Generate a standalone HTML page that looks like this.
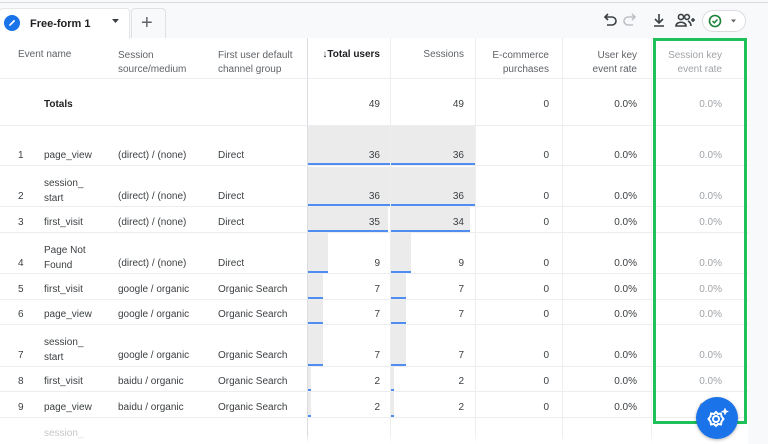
<!DOCTYPE html>
<html><head><meta charset="utf-8"><style>
*{margin:0;padding:0;box-sizing:border-box}
body{width:768px;height:444px;overflow:hidden;background:#fff;font-family:"Liberation Sans",Arial,sans-serif;font-size:10px;color:#3c4043;position:relative}
.a{position:absolute;line-height:12px;white-space:nowrap;margin-top:2px}
.r{text-align:right}
.h{color:#5f6368}
.hl{position:absolute;left:0;width:748px;height:1px;background:#ebedf0}
.vl{position:absolute;width:1px;background:#eceef0}
.g{position:absolute;background:#ebebeb}
.b{position:absolute;height:2px;background:#4f8ef0}
.f{color:#a0a4a8}
</style></head><body>
<!-- top bar -->
<div style="position:absolute;left:0;top:0;width:768px;height:38px;background:#f8f9fa"></div>
<div style="position:absolute;left:0;top:2px;width:768px;height:1px;background:#dadce0"></div>
<div style="position:absolute;left:-1px;top:8px;width:131px;height:31px;background:#fff;border:1px solid #e3e5e8;border-bottom:none;border-radius:4px 4px 0 0"></div>
<div style="position:absolute;left:131px;top:8px;width:35px;height:30px;background:#f8f9fa;border:1px solid #dfe1e5;border-bottom:none;border-radius:4px 4px 0 0"></div>
<div style="position:absolute;left:4px;top:15px;width:16px;height:16px;border-radius:50%;background:#1a73e8"></div>
<svg style="position:absolute;left:4px;top:15px" width="16" height="16"><path d="M5 11 L5.5 9.3 L10 4.8 L11.2 6 L6.7 10.5 Z" fill="#fff"/></svg>
<div class="a" style="left:30px;top:16px;font-size:11px;font-weight:bold;color:#202124">Free-form 1</div>
<svg style="position:absolute;left:112px;top:19px" width="8" height="5"><path d="M0 0H7L3.5 4Z" fill="#3c4043"/></svg>
<div class="a" style="left:141px;top:7px;font-size:20px;line-height:28px;color:#5f6368">+</div>
<!-- right icons -->
<svg style="position:absolute;left:602px;top:12px" width="140" height="18" fill="none" stroke-width="1.6">
<path d="M4 5 H10 A4 4 0 0 1 10 13 H5 M6 2 L3 5 L6 8" stroke="#3c4043"/>
<path d="M32 5 H26 A4 4 0 0 0 26 13 H31 M30 2 L33 5 L30 8" stroke="#bdc1c6"/>
<path d="M57 2 V10 M53 7 L57 11 L61 7 M52 14 H62" stroke="#3c4043"/>
<circle cx="79" cy="5" r="2.6" stroke="#3c4043"/><circle cx="85" cy="5" r="2.4" stroke="#3c4043"/><path d="M74 14 C74 9 84 9 84 14 Z M86 9 C88 10 89 12 89 14 M89 8 H93 M91 6 V10" stroke="#3c4043"/>
</svg>
<div style="position:absolute;left:702px;top:10px;width:44px;height:22px;border:1px solid #dadce0;border-radius:11px;background:#fff"></div>
<svg style="position:absolute;left:707px;top:13px" width="36" height="16" fill="none"><circle cx="8" cy="8" r="5.5" stroke="#188038" stroke-width="1.6"/><path d="M5.5 8 L7.3 9.8 L10.5 6.5" stroke="#188038" stroke-width="1.5"/><path d="M24 6.5H29L26.5 9.5Z" fill="#5f6368"/></svg>
<!-- right gray strip -->
<div style="position:absolute;left:748px;top:38px;width:20px;height:406px;background:#f8f9fa"></div>
<!-- vertical lines -->
<div class="vl" style="left:307px;top:38px;height:406px;background:#dadce0"></div>
<div class="vl" style="left:390px;top:38px;height:406px"></div>
<div class="vl" style="left:475px;top:38px;height:406px"></div>
<div class="vl" style="left:562px;top:38px;height:406px"></div>
<div class="vl" style="left:651px;top:38px;height:406px"></div>
<!-- headers -->
<div class="a h" style="left:18px;top:47px">Event name</div>
<div class="a h" style="left:118px;top:47px;line-height:14px">Session<br>source/medium</div>
<div class="a h" style="left:218px;top:47px;line-height:14px">First user default<br>channel group</div>
<div class="a r" style="left:310px;width:70px;top:47px;color:#202124;font-weight:bold">↓Total users</div>
<div class="a r h" style="left:392px;width:72px;top:47px">Sessions</div>
<div class="a r h" style="left:476px;width:73px;top:47px;line-height:14px">E-commerce<br>purchases</div>
<div class="a r h" style="left:563px;width:74px;top:47px;line-height:14px">User key<br>event rate</div>
<div class="a r f" style="left:653px;width:69px;top:47px;line-height:14px">Session key<br>event rate</div>
<div class="hl" style="top:78px"></div>
<!-- totals -->
<div class="a" style="left:44px;top:97px;font-weight:bold;color:#202124">Totals</div>
<div class="a r" style="left:310px;width:70px;top:97px">49</div>
<div class="a r" style="left:392px;width:72px;top:97px">49</div>
<div class="a r" style="left:476px;width:73px;top:97px">0</div>
<div class="a r" style="left:563px;width:74px;top:97px">0.0%</div>
<div class="a r f" style="left:653px;width:69px;top:97px">0.0%</div>
<div class="hl" style="top:125px"></div>
<!-- bars -->
<div class="g" style="left:308px;top:126px;width:82px;height:39px"></div><div class="b" style="left:308px;top:163px;width:82px"></div>
<div class="g" style="left:391px;top:126px;width:84px;height:39px"></div><div class="b" style="left:391px;top:163px;width:84px"></div>
<div class="g" style="left:308px;top:167px;width:82px;height:39px"></div><div class="b" style="left:308px;top:204px;width:82px"></div>
<div class="g" style="left:391px;top:167px;width:84px;height:39px"></div><div class="b" style="left:391px;top:204px;width:84px"></div>
<div class="g" style="left:308px;top:207px;width:80px;height:25px"></div><div class="b" style="left:308px;top:230px;width:80px"></div>
<div class="g" style="left:391px;top:207px;width:79px;height:25px"></div><div class="b" style="left:391px;top:230px;width:79px"></div>
<div class="g" style="left:308px;top:233px;width:20px;height:40px"></div><div class="b" style="left:308px;top:271px;width:20px"></div>
<div class="g" style="left:391px;top:233px;width:20px;height:40px"></div><div class="b" style="left:391px;top:271px;width:20px"></div>
<div class="g" style="left:308px;top:274px;width:15px;height:25px"></div><div class="b" style="left:308px;top:297px;width:15px"></div>
<div class="g" style="left:391px;top:274px;width:15px;height:25px"></div><div class="b" style="left:391px;top:297px;width:15px"></div>
<div class="g" style="left:308px;top:300px;width:15px;height:24px"></div><div class="b" style="left:308px;top:322px;width:15px"></div>
<div class="g" style="left:391px;top:300px;width:15px;height:24px"></div><div class="b" style="left:391px;top:322px;width:15px"></div>
<div class="g" style="left:308px;top:325px;width:15px;height:41px"></div><div class="b" style="left:308px;top:364px;width:15px"></div>
<div class="g" style="left:391px;top:325px;width:15px;height:41px"></div><div class="b" style="left:391px;top:364px;width:15px"></div>
<div class="g" style="left:308px;top:367px;width:3px;height:24px"></div><div class="b" style="left:308px;top:389px;width:3px"></div>
<div class="g" style="left:391px;top:367px;width:3px;height:24px"></div><div class="b" style="left:391px;top:389px;width:3px"></div>
<div class="g" style="left:308px;top:392px;width:3px;height:25px"></div><div class="b" style="left:308px;top:415px;width:3px"></div>
<div class="g" style="left:391px;top:392px;width:3px;height:25px"></div><div class="b" style="left:391px;top:415px;width:3px"></div>
<!-- row separators -->
<div class="hl" style="top:165px"></div><div class="hl" style="top:206px"></div><div class="hl" style="top:232px"></div><div class="hl" style="top:273px"></div><div class="hl" style="top:299px"></div><div class="hl" style="top:324px"></div><div class="hl" style="top:366px"></div><div class="hl" style="top:391px"></div><div class="hl" style="top:417px"></div>
<!-- rows -->
<div class="a" style="left:18px;top:148px">1</div><div class="a" style="left:44px;top:148px">page_view</div><div class="a" style="left:118px;top:148px">(direct) / (none)</div><div class="a" style="left:218px;top:148px">Direct</div>
<div class="a r" style="left:310px;width:70px;top:148px">36</div><div class="a r" style="left:392px;width:72px;top:148px">36</div><div class="a r" style="left:476px;width:73px;top:148px">0</div><div class="a r" style="left:563px;width:74px;top:148px">0.0%</div><div class="a r f" style="left:653px;width:69px;top:148px">0.0%</div>

<div class="a" style="left:18px;top:189px">2</div><div class="a" style="left:44px;top:174px;line-height:15px">session_<br>start</div><div class="a" style="left:118px;top:189px">(direct) / (none)</div><div class="a" style="left:218px;top:189px">Direct</div>
<div class="a r" style="left:310px;width:70px;top:189px">36</div><div class="a r" style="left:392px;width:72px;top:189px">36</div><div class="a r" style="left:476px;width:73px;top:189px">0</div><div class="a r" style="left:563px;width:74px;top:189px">0.0%</div><div class="a r f" style="left:653px;width:69px;top:189px">0.0%</div>

<div class="a" style="left:18px;top:215px">3</div><div class="a" style="left:44px;top:215px">first_visit</div><div class="a" style="left:118px;top:215px">(direct) / (none)</div><div class="a" style="left:218px;top:215px">Direct</div>
<div class="a r" style="left:310px;width:70px;top:215px">35</div><div class="a r" style="left:392px;width:72px;top:215px">34</div><div class="a r" style="left:476px;width:73px;top:215px">0</div><div class="a r" style="left:563px;width:74px;top:215px">0.0%</div><div class="a r f" style="left:653px;width:69px;top:215px">0.0%</div>

<div class="a" style="left:18px;top:256px">4</div><div class="a" style="left:44px;top:241px;line-height:15px">Page Not<br>Found</div><div class="a" style="left:118px;top:256px">(direct) / (none)</div><div class="a" style="left:218px;top:256px">Direct</div>
<div class="a r" style="left:310px;width:70px;top:256px">9</div><div class="a r" style="left:392px;width:72px;top:256px">9</div><div class="a r" style="left:476px;width:73px;top:256px">0</div><div class="a r" style="left:563px;width:74px;top:256px">0.0%</div><div class="a r f" style="left:653px;width:69px;top:256px">0.0%</div>

<div class="a" style="left:18px;top:282px">5</div><div class="a" style="left:44px;top:282px">first_visit</div><div class="a" style="left:118px;top:282px">google / organic</div><div class="a" style="left:218px;top:282px">Organic Search</div>
<div class="a r" style="left:310px;width:70px;top:282px">7</div><div class="a r" style="left:392px;width:72px;top:282px">7</div><div class="a r" style="left:476px;width:73px;top:282px">0</div><div class="a r" style="left:563px;width:74px;top:282px">0.0%</div><div class="a r f" style="left:653px;width:69px;top:282px">0.0%</div>

<div class="a" style="left:18px;top:307px">6</div><div class="a" style="left:44px;top:307px">page_view</div><div class="a" style="left:118px;top:307px">google / organic</div><div class="a" style="left:218px;top:307px">Organic Search</div>
<div class="a r" style="left:310px;width:70px;top:307px">7</div><div class="a r" style="left:392px;width:72px;top:307px">7</div><div class="a r" style="left:476px;width:73px;top:307px">0</div><div class="a r" style="left:563px;width:74px;top:307px">0.0%</div><div class="a r f" style="left:653px;width:69px;top:307px">0.0%</div>

<div class="a" style="left:18px;top:348px">7</div><div class="a" style="left:44px;top:333px;line-height:15px">session_<br>start</div><div class="a" style="left:118px;top:348px">google / organic</div><div class="a" style="left:218px;top:348px">Organic Search</div>
<div class="a r" style="left:310px;width:70px;top:348px">7</div><div class="a r" style="left:392px;width:72px;top:348px">7</div><div class="a r" style="left:476px;width:73px;top:348px">0</div><div class="a r" style="left:563px;width:74px;top:348px">0.0%</div><div class="a r f" style="left:653px;width:69px;top:348px">0.0%</div>

<div class="a" style="left:18px;top:374px">8</div><div class="a" style="left:44px;top:374px">first_visit</div><div class="a" style="left:118px;top:374px">baidu / organic</div><div class="a" style="left:218px;top:374px">Organic Search</div>
<div class="a r" style="left:310px;width:70px;top:374px">2</div><div class="a r" style="left:392px;width:72px;top:374px">2</div><div class="a r" style="left:476px;width:73px;top:374px">0</div><div class="a r" style="left:563px;width:74px;top:374px">0.0%</div><div class="a r f" style="left:653px;width:69px;top:374px">0.0%</div>

<div class="a" style="left:18px;top:400px">9</div><div class="a" style="left:44px;top:400px">page_view</div><div class="a" style="left:118px;top:400px">baidu / organic</div><div class="a" style="left:218px;top:400px">Organic Search</div>
<div class="a r" style="left:310px;width:70px;top:400px">2</div><div class="a r" style="left:392px;width:72px;top:400px">2</div><div class="a r" style="left:476px;width:73px;top:400px">0</div><div class="a r" style="left:563px;width:74px;top:400px">0.0%</div><div class="a r f" style="left:653px;width:69px;top:400px">0.0%</div>

<div class="a" style="left:44px;top:426px;color:#c4c7ca">session_</div>
<div style="position:absolute;left:0;top:436px;width:748px;height:8px;background:linear-gradient(rgba(255,255,255,.3),#fff)"></div>
<!-- green box -->
<div style="position:absolute;left:653px;top:38px;width:94px;height:386px;border:3px solid #1ec05a"></div>
<!-- FAB -->
<div style="position:absolute;left:696px;top:397px;width:42px;height:42px;border-radius:50%;background:#1a73e8;box-shadow:0 1px 3px rgba(0,0,0,.3)"></div>
<svg style="position:absolute;left:705px;top:406px" width="26" height="24" fill="none" stroke="#fff" stroke-width="2"><circle cx="11" cy="13" r="3"/><path d="M11 6 L13 8 L16 7.5 L16.5 10.5 L18.5 13 L16.5 15.5 L16 18.5 L13 18 L11 20 L9 18 L6 18.5 L5.5 15.5 L3.5 13 L5.5 10.5 L6 7.5 L9 8 Z"/><path d="M20 2 L21 4.5 L23.5 5.5 L21 6.5 L20 9 L19 6.5 L16.5 5.5 L19 4.5Z" fill="#fff" stroke-width="0.5"/></svg>
</body></html>
